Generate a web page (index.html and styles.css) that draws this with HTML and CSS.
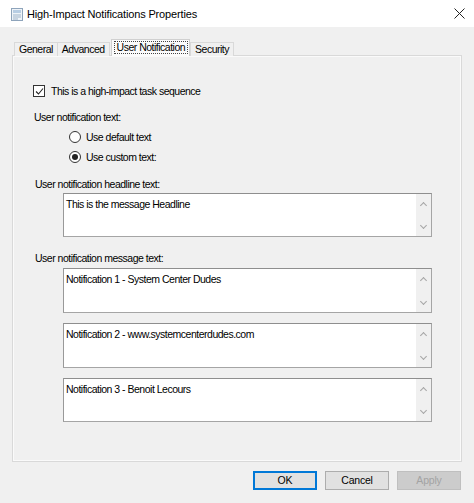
FILE: index.html
```html
<!DOCTYPE html>
<html>
<head>
<meta charset="utf-8">
<link rel="stylesheet" href="styles.css">
</head>
<body>
<div class="window">
  <div class="titlebar">
    <svg class="appicon" width="12" height="13" viewBox="0 0 12 13">
      <rect x="0.5" y="0.5" width="11" height="12" fill="#eef3f8" stroke="#8ea4bb"/>
      <rect x="2" y="2" width="8" height="3" fill="#b7cde3"/>
      <line x1="2" y1="7" x2="10" y2="7" stroke="#9fb4c9"/>
      <line x1="2" y1="9" x2="10" y2="9" stroke="#9fb4c9"/>
      <line x1="2" y1="11" x2="7" y2="11" stroke="#9fb4c9"/>
    </svg>
    <span class="title">High-Impact Notifications Properties</span>
    <svg class="close" width="11" height="11" viewBox="0 0 11 11">
      <path d="M0.5 0.5 L10.5 10.5 M10.5 0.5 L0.5 10.5" stroke="#222" stroke-width="1"/>
    </svg>
  </div>

  <div class="tabs">
    <div class="tab first">General</div>
    <div class="tab">Advanced</div>
    <div class="tab selected"><span class="focus">User Notification</span></div>
    <div class="tab">Security</div>
  </div>

  <div class="panel">
    <div class="checkrow">
      <span class="checkbox">
        <svg width="9" height="9" viewBox="0 0 9 9"><path d="M1 4.5 L3.5 7 L8 1.5" fill="none" stroke="#222" stroke-width="1.1"/></svg>
      </span>
      <span>This is a high-impact task sequence</span>
    </div>

    <div class="label l1">User notification text:</div>

    <div class="radiorow r1"><span class="radio"></span><span>Use default text</span></div>
    <div class="radiorow r2"><span class="radio on"></span><span>Use custom text:</span></div>

    <div class="label l2">User notification headline text:</div>
    <div class="textbox tb-head">
      <div class="tbtext">This is the message Headline</div>
      <div class="scroll"><span class="up"></span><span class="down"></span></div>
    </div>

    <div class="label l3">User notification message text:</div>
    <div class="textbox tb1">
      <div class="tbtext">Notification 1 - System Center Dudes</div>
      <div class="scroll"><span class="up"></span><span class="down"></span></div>
    </div>
    <div class="textbox tb2">
      <div class="tbtext">Notification 2 - www.systemcenterdudes.com</div>
      <div class="scroll"><span class="up"></span><span class="down"></span></div>
    </div>
    <div class="textbox tb3">
      <div class="tbtext">Notification 3 - Benoit Lecours</div>
      <div class="scroll"><span class="up"></span><span class="down"></span></div>
    </div>
  </div>

  <div class="buttons">
    <div class="btn default">OK</div>
    <div class="btn">Cancel</div>
    <div class="btn disabled">Apply</div>
  </div>
</div>
</body>
</html>
```

FILE: styles.css
```css
* { box-sizing: border-box; }
html, body { margin: 0; padding: 0; }
body {
  width: 474px;
  height: 503px;
  background: #f0f0f0;
  font-family: "Liberation Sans", Arial, sans-serif;
  font-size: 10.5px;
  letter-spacing: -0.5px;
  color: #000;
  overflow: hidden;
}
.window { width: 474px; height: 503px; display: flex; flex-direction: column; }

.titlebar {
  height: 27px;
  background: #fff;
  display: flex;
  align-items: center;
  padding-left: 11px;
  padding-right: 9px;
}
.appicon { margin-top: 1px; }
.title { margin-left: 4px; font-size: 11px; letter-spacing: -0.15px; color: #000; flex: 1; }

.tabs {
  margin-top: 12px;
  margin-left: 14px;
  height: 17px;
  display: flex;
  align-items: flex-end;
  position: relative;
  z-index: 2;
}
.tab {
  height: 14px;
  line-height: 13px;
  padding: 0 4px 0 4px;
  background: #f0f0f0;
  border: 1px solid #d9d9d9;
  border-bottom: none;
  margin-left: -1px;
}
.tab.first { margin-left: 0; }
.tab.selected {
  height: 17px;
  background: #fbfbfb;
  margin-left: 1px;
  margin-right: 1px;
  padding: 1px 1px 0 2px;
  line-height: 13px;
  border-color: #d0d0d0;
}
.focus {
  display: inline-block;
  border: 1px dotted #444;
  padding: 0 2px;
  line-height: 11px;
  height: 13px;
}

.panel {
  margin-left: 12px;
  width: 450px;
  height: 407px;
  margin-top: -1px;
  border: 1px solid #d9d9d9;
  box-shadow: inset 0 0 0 1px #fafafa;
  padding-left: 20px;
  display: flex;
  flex-direction: column;
  align-items: flex-start;
}

.checkrow {
  margin-top: 29px;
  height: 12px;
  display: flex;
  align-items: center;
  gap: 6px;
}
.checkbox {
  width: 12px;
  height: 12px;
  border: 1px solid #333;
  background: #fff;
  display: flex;
  align-items: center;
  justify-content: center;
}
.checkbox svg { display: block; }

.label { height: 14px; line-height: 14px; margin-left: 1px; }
.l1 { margin-top: 13px; }
.l2 { margin-top: 13px; margin-left: 2px; }
.l3 { margin-top: 14px; margin-left: 2px; }

.radiorow {
  height: 14px;
  display: flex;
  align-items: center;
  gap: 5px;
  margin-left: 36px;
}
.r1 { margin-top: 6px; }
.r2 { margin-top: 6px; }
.radio {
  width: 12px;
  height: 12px;
  border: 1px solid #333;
  border-radius: 50%;
  background: #fff;
  display: flex;
  align-items: center;
  justify-content: center;
}
.radio.on::after {
  content: "";
  width: 6px;
  height: 6px;
  border-radius: 50%;
  background: #222;
}

.textbox {
  margin-left: 30px;
  width: 369px;
  height: 45px;
  background: #fff;
  border: 1px solid #a5a5a5;
  border-top-color: #8e8e8e;
  border-left-color: #999;
  display: flex;
}
.tb-head { margin-top: 2px; height: 44px; }
.tb1 { margin-top: 3px; }
.tb2 { margin-top: 10px; }
.tb3 { margin-top: 10px; height: 44px; }
.tbtext { flex: 1; padding: 4px 0 0 2px; line-height: 12px; white-space: nowrap; overflow: hidden; }
.scroll {
  width: 15px;
  background: #f0f0f0;
  display: flex;
  flex-direction: column;
  justify-content: space-between;
  align-items: center;
  padding: 7px 0 6px;
}
.up, .down {
  width: 5px;
  height: 5px;
  border-left: 1px solid #a6a6a6;
  border-top: 1px solid #a6a6a6;
}
.up { transform: rotate(45deg); margin-top: 2px; }
.down { transform: rotate(225deg); margin-bottom: 2px; }

.buttons {
  margin-top: 9px;
  display: flex;
  justify-content: flex-end;
  gap: 8px;
  padding-right: 13px;
}
.btn {
  width: 64px;
  height: 19px;
  line-height: 17px;
  text-align: center;
  background: #e1e1e1;
  border: 1px solid #adadad;
  font-size: 10.5px;
  letter-spacing: -0.2px;
}
.btn.default { border: 1px solid #0078d7; box-shadow: inset 0 0 0 1px #0078d7; }
.btn.disabled { background: #cccccc; border-color: #bfbfbf; color: #a3a3a3; }
```
